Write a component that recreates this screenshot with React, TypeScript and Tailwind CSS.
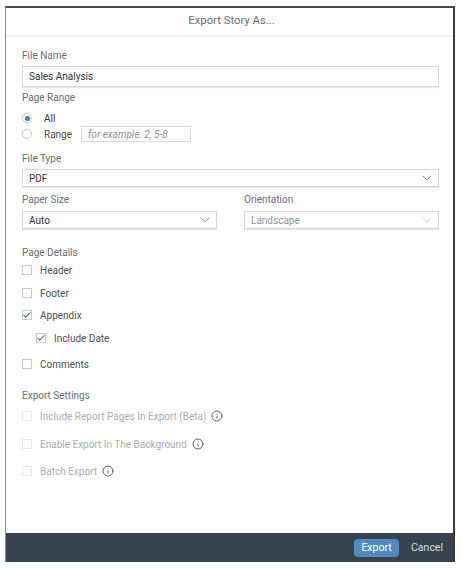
import { ChevronDown, Check, Info } from "lucide-react";

function FieldLabel({ children }: { children: string }) {
  return <div className="h-4 text-[10px] leading-4 text-[#666f78]">{children}</div>;
}

function SelectBox({ value, disabled = false, className = "" }: { value: string; disabled?: boolean; className?: string }) {
  return (
    <div className={`flex h-[18px] items-center justify-between border border-[#d5d8da] pl-[6px] pr-[3px] text-[10px] shadow-[0_1px_1px_#e8e8e8] ${disabled ? "text-[#8f959a]" : "text-[#32363a]"} ${className}`}>
      <span>{value}</span>
      <ChevronDown className={`h-4 w-4 ${disabled ? "text-[#b4c4d4]" : "text-[#427cac]"}`} strokeWidth={1.1} />
    </div>
  );
}

function CheckRow({ label, checked = false, disabled = false, info = false, className = "" }: { label: string; checked?: boolean; disabled?: boolean; info?: boolean; className?: string }) {
  return (
    <div className={`flex h-[14px] items-center text-[10px] ${disabled ? "text-[#a9adb1]" : "text-[#4a5056]"} ${className}`}>
      <span className={`mr-2 flex h-[10px] w-[10px] items-center justify-center border ${disabled ? "border-[#e6e8e9]" : "border-[#c6cacd]"}`}>
        {checked && <Check className="h-[10px] w-[10px] shrink-0 text-[#2f6fa8]" strokeWidth={2.5} />}
      </span>
      <span>{label}</span>
      {info && <Info className="ml-[5px] h-3 w-3 text-[#4a5158]" strokeWidth={1.8} />}
    </div>
  );
}

export default function App() {
  return (
    <div className="h-[568px] w-[462px] bg-white pl-[5px] pt-[6px] font-['Roboto','Noto_Sans',sans-serif]">
      <div className="flex h-[556px] w-[450px] flex-col border-l border-r-2 border-t-2 border-l-[#8a8a8a] border-r-[#3a3a3a] border-t-[#4a4a4a]">
        <div className="flex h-[29px] shrink-0 items-center justify-center border-b-2 border-[#f0f1f2] pl-1 text-[11.3px] text-[#666f78]">Export Story As...</div>

        <div className="flex-1 pl-4 pr-[14px] pt-[11px]">
          <FieldLabel>File Name</FieldLabel>
          <div className="mt-[2px] flex h-[21px] items-center border border-[#d5d8da] pl-[6px] text-[10px] text-[#32363a] shadow-[0_1px_1px_#e8e8e8]">Sales Analysis</div>

          <div className="mt-[3px]"><FieldLabel>Page Range</FieldLabel></div>
          <div className="mt-[5px] flex h-[14px] items-center text-[10px] text-[#32363a]">
            <span className="mr-3 flex h-[10px] w-[10px] items-center justify-center rounded-full border border-[#c6cacd]">
              <span className="h-[5px] w-[5px] rounded-full bg-[#427cac]" />
            </span>
            All
          </div>
          <div className="mt-[1px] flex h-4 items-center text-[10px] text-[#4a5056]">
            <span className="mr-3 h-[10px] w-[10px] rounded-full border border-[#c6cacd]" />
            <span className="w-[37px]">Range</span>
            <span className="flex h-4 w-[110px] items-center border border-[#d5d8da] pl-[6px] text-[10px] italic text-[#8f959a]">for example: 2, 5-8</span>
          </div>

          <div className="mt-[9px]"><FieldLabel>File Type</FieldLabel></div>
          <SelectBox value="PDF" className="mt-[2px]" />

          <div className="mt-[5px] grid grid-cols-[195px_195px] gap-x-[27px]">
            <div>
              <FieldLabel>Paper Size</FieldLabel>
              <SelectBox value="Auto" className="mt-[3px]" />
            </div>
            <div>
              <FieldLabel>Orientation</FieldLabel>
              <SelectBox value="Landscape" disabled className="mt-[3px]" />
            </div>
          </div>

          <div className="mt-[16px]"><FieldLabel>Page Details</FieldLabel></div>
          <CheckRow label="Header" className="mt-[2px]" />
          <CheckRow label="Footer" className="mt-[9px]" />
          <CheckRow label="Appendix" checked className="mt-[8px]" />
          <CheckRow label="Include Date" checked className="ml-[14px] mt-[9px]" />
          <CheckRow label="Comments" className="mt-[12px]" />

          <div className="mt-[17px]"><FieldLabel>Export Settings</FieldLabel></div>
          <CheckRow label="Include Report Pages In Export (Beta)" disabled info className="mt-[5px]" />
          <CheckRow label="Enable Export In The Background" disabled info className="mt-[14px]" />
          <CheckRow label="Batch Export" disabled info className="mt-[13px]" />
        </div>

        <div className="flex h-[29px] shrink-0 items-center justify-end gap-3 bg-[#37434f] pr-[10px] text-[10.5px]">
          <button className="h-[18px] w-[45px] rounded-sm bg-[#4f8cc2] text-white">Export</button>
          <button className="text-[#d5dde5]">Cancel</button>
        </div>
      </div>
    </div>
  );
}
